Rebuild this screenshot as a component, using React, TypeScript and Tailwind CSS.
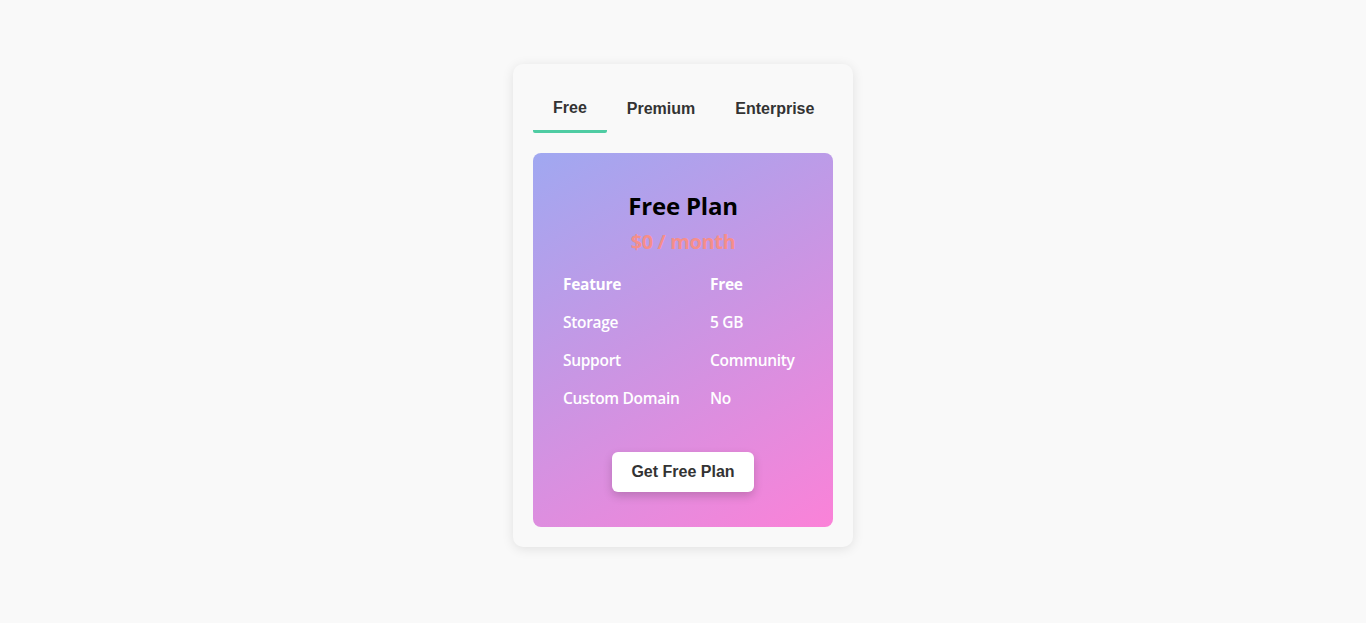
const tabs = ["Free", "Premium", "Enterprise"];

const rows = [
  { label: "Feature", value: "Free", head: true },
  { label: "Storage", value: "5 GB" },
  { label: "Support", value: "Community" },
  { label: "Custom Domain", value: "No" },
];

export default function App() {
  return (
    <div className="min-h-[623px] w-full bg-[#f9f9f9] flex justify-center pt-[64px]">
      <div className="w-[340px] h-[483px] bg-[#f9f9f9] rounded-[10px] shadow-[0_2px_12px_rgba(0,0,0,0.1)] p-[20px]">
        {/* tabs */}
        <div className="flex font-['Liberation_Sans',Arial,sans-serif]">
          {tabs.map((t, i) => (
            <button
              key={t}
              className={`px-[20px] pt-[16px] pb-[13px] text-[16px] leading-[18px] font-bold text-[#333] border-b-[3px] ${
                i === 0 ? "border-[#4fcca3] -translate-y-px rounded-b-[2px]" : "border-transparent"
              }`}
            >
              {t}
            </button>
          ))}
        </div>

        {/* plan card */}
        <div className="mt-[19px] h-[374px] rounded-[8px] bg-[linear-gradient(150deg,#a0a8f1_0%,#c896e4_45%,#fb82d8_100%)] px-[30px] pt-[37px] text-center font-['Open_Sans',sans-serif]">
          <h2 className="text-[24px] leading-[32px] font-bold text-black tracking-[-0.2px]">Free Plan</h2>
          <p className="mt-[6px] text-[20px] leading-[28px] font-bold text-[#f58e8a] tracking-[-0.4px]">$0 / month</p>
          <div className="mt-[10px] text-left text-white text-[15.5px] tracking-[-0.3px]">
            {rows.map((r) => (
              <div key={r.label} className="grid grid-cols-[147px_1fr] h-[38px] items-center">
                <span className={r.head ? "font-bold" : "font-semibold"}>{r.label}</span>
                <span className={r.head ? "font-bold" : "font-semibold"}>{r.value}</span>
              </div>
            ))}
          </div>
          <button className="mt-[34px] w-[142px] h-[40px] rounded-[6px] bg-white shadow-[0_4px_10px_rgba(0,0,0,0.18)] text-[16px] font-bold text-[#333] font-['Liberation_Sans',Arial,sans-serif]">
            Get Free Plan
          </button>
        </div>
      </div>
    </div>
  );
}
